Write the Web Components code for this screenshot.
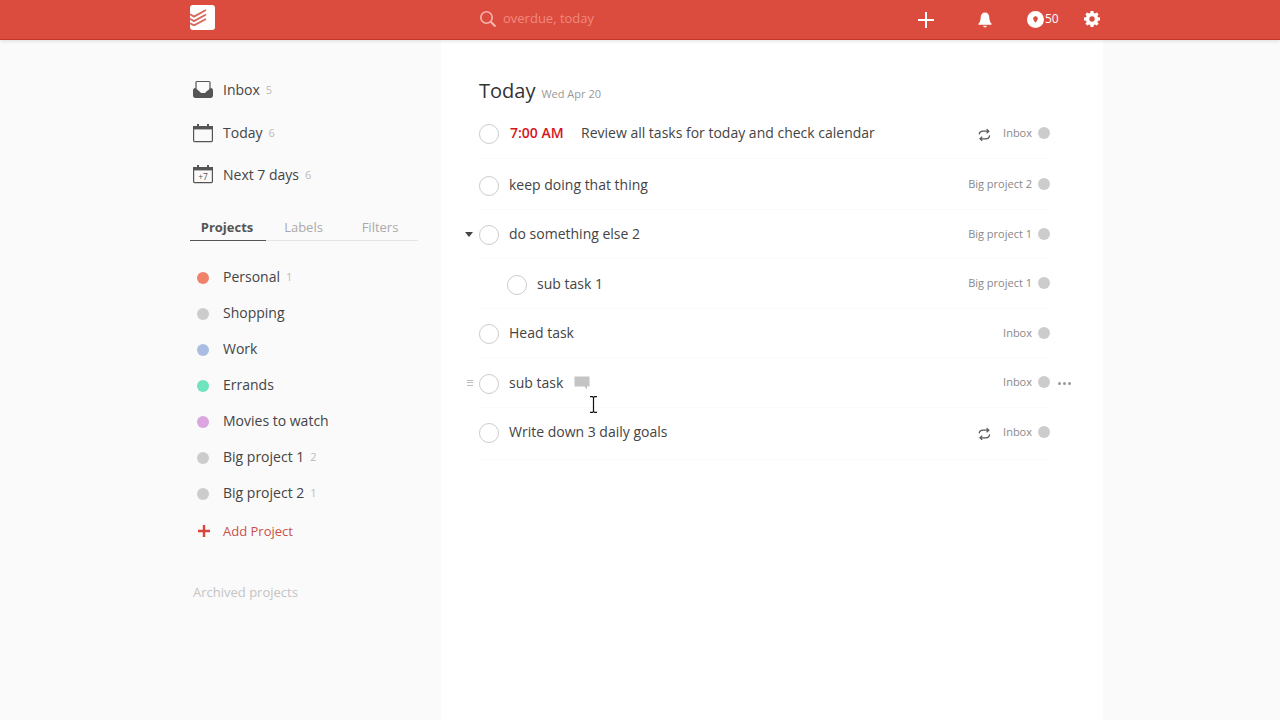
<!DOCTYPE html>
<html>
<head>
<meta charset="utf-8">
<title>Today</title>
<style>
    html, body { margin: 0; height: 100%; }
    body { background: #fafafa; font-family: "Open Sans", sans-serif; color: #333; overflow: hidden; }
</style>
</head>
<body>
<todo-app>
    <todo-sidebar slot="side"></todo-sidebar>
    <todo-task-list slot="main" heading="Today" date="Wed Apr 20">
        <todo-task time="7:00 AM" project="Inbox" repeat style="--h:51px">Review all tasks for today and check calendar</todo-task>
        <todo-task project="Big project 2" style="--h:51px;--pt:2px;--rt:-4px">keep doing that thing</todo-task>
        <todo-task project="Big project 1" caret style="--h:49px">do something else 2</todo-task>
        <todo-task project="Big project 1" indent style="--h:50px">sub task 1</todo-task>
        <todo-task project="Inbox" style="--h:49px">Head task</todo-task>
        <todo-task project="Inbox" hover style="--h:50px">sub task</todo-task>
        <todo-task project="Inbox" repeat style="--h:52px;--pb:3px">Write down 3 daily goals</todo-task>
    </todo-task-list>
</todo-app>

<script>
const REPEAT_ICON = `<svg width="13" height="14" viewBox="0 0 13 14" fill="none" stroke="#555" stroke-width="1.2">
    <path d="M1.2 6.4C1.4 4.2 3 3.2 5 3.2H10.6"/><path d="M8.6 1.2L10.8 3.2L8.6 5.2"/>
    <path d="M11.6 7.4C11.4 9.8 9.8 10.8 7.8 10.8H2.2"/><path d="M4.2 8.8L2 10.8L4.2 12.8"/>
</svg>`;

class TodoApp extends HTMLElement {
    constructor() {
        super();
        this.attachShadow({ mode: "open" });
        this.shadowRoot.innerHTML = `
        <style>
            :host { display: block; height: 720px; }
            .bar { height: 39px; background: #db4c3f; border-bottom: 1px solid #c53727; box-shadow: 0 1px 4px rgba(0,0,0,0.12); position: relative; }
            .bar-inner { display: flex; align-items: center; height: 37px; padding-left: 190px; }
            .logo { width: 25px; height: 25px; background: #fff; border-radius: 3px; display: flex; align-items: center; margin-right: 264px; margin-top: -2px; }
            .search { display: flex; align-items: center; width: 439px; }
            .search span { font-size: 13px; color: #f0897e; margin: -2px 0 0 6px; }
            .action { display: flex; align-items: center; margin-top: 2px; }
            .karma { display: flex; align-items: center; color: #fff; font-size: 12px; margin-top: 2px; }
            .karma span { margin: -3px 0 0 1px; }
            .body { display: flex; height: 680px; }
            .side { width: 251px; padding-left: 190px; flex: none; }
            .main { width: 662px; background: #fff; flex: none; }
        </style>
        <div class="bar">
            <div class="bar-inner">
                <div class="logo">
                    <svg width="17" height="17" viewBox="0 0 17 17" fill="none" stroke="#d9665b" stroke-width="1.8">
                        <path d="M0 5.3L4 7.6L16 1"/><path d="M0 9.8L4 12.1L16 5.5"/><path d="M0 14.3L4 16.4L16 10"/>
                    </svg>
                </div>
                <div class="search">
                    <svg width="18" height="18" viewBox="0 0 18 18" fill="none" stroke="#f6b5ae" stroke-width="1.6">
                        <circle cx="7.5" cy="7.5" r="5.7"/><path d="M11.7 11.7L16.5 16.5" stroke-width="2"/>
                    </svg>
                    <span>overdue, today</span>
                </div>
                <div class="action" style="width:60px">
                    <svg width="16" height="16" viewBox="0 0 16 16" fill="none" stroke="#fff" stroke-width="2"><path d="M8 0V16M0 8H16"/></svg>
                </div>
                <div class="action" style="width:49px">
                    <svg width="14" height="16" viewBox="0 0 14 16" fill="#fff"><path d="M7 0.5C9.8 0.5 11.2 2.6 11.3 5.4C11.4 8.6 12.2 10.2 13.6 11.8C13.9 12.2 13.7 12.7 13.2 12.7H0.8C0.3 12.7 0.1 12.2 0.4 11.8C1.8 10.2 2.6 8.6 2.7 5.4C2.8 2.6 4.2 0.5 7 0.5Z"/><path d="M5.2 13.7H8.8C8.6 14.8 7.9 15.4 7 15.4C6.1 15.4 5.4 14.8 5.2 13.7Z"/></svg>
                </div>
                <div class="karma" style="width:57px">
                    <svg width="17" height="17" viewBox="0 0 17 17"><circle cx="8.5" cy="8.5" r="8.5" fill="#fff"/><path d="M8.5 5.2C10 5.2 10.8 6.2 10.8 7.4C10.8 8.8 9.6 10.2 8.5 11.6C7.4 10.2 6.2 8.8 6.2 7.4C6.2 6.2 7 5.2 8.5 5.2Z" fill="#db4c3f"/></svg>
                    <span>50</span>
                </div>
                <div class="action" style="margin-top:0">
                    <svg width="16" height="16" viewBox="0 0 16 16" fill="#fff">
                        <path fill-rule="evenodd" d="M6.6 0H9.4L9.8 2.1L11 2.6L12.8 1.4L14.6 3.2L13.4 5L13.9 6.2L16 6.6V9.4L13.9 9.8L13.4 11L14.6 12.8L12.8 14.6L11 13.4L9.8 13.9L9.4 16H6.6L6.2 13.9L5 13.4L3.2 14.6L1.4 12.8L2.6 11L2.1 9.8L0 9.4V6.6L2.1 6.2L2.6 5L1.4 3.2L3.2 1.4L5 2.6L6.2 2.1ZM8 5.3A2.7 2.7 0 1 0 8 10.7A2.7 2.7 0 1 0 8 5.3Z"/>
                    </svg>
                </div>
            </div>
        </div>
        <div class="body">
            <div class="side"><slot name="side"></slot></div>
            <div class="main"><slot name="main"></slot></div>
        </div>`;
    }
}

class TodoSidebar extends HTMLElement {
    constructor() {
        super();
        this.attachShadow({ mode: "open" });
        const projects = [
            ["Personal", "#f0816a", "1"],
            ["Shopping", "#ccc", ""],
            ["Work", "#a9bde3", ""],
            ["Errands", "#6fe3bd", ""],
            ["Movies to watch", "#dba5e0", ""],
            ["Big project 1", "#ccc", "2"],
            ["Big project 2", "#ccc", "1"]
        ];
        const rows = projects.map(p => `
            <div class="project">
                <i class="dot" style="background:${p[1]}"></i>
                <span class="name">${p[0]}</span>
                <span class="count">${p[2]}</span>
            </div>`).join("");
        this.shadowRoot.innerHTML = `
        <style>
            :host { display: block; width: 228px; padding-top: 28px; font-size: 14px; color: #444; }
            .nav { display: flex; align-items: center; height: 43px; padding-left: 3px; }
            .nav:nth-of-type(3) { height: 42px; margin-top: -1px; }
            .nav svg { width: 20px; height: 20px; margin-right: 10px; flex: none; }
            .count { font-size: 11px; color: #bbb; margin-left: 6px; }
            .tabs { display: flex; margin-top: 19.5px; width: 228px; height: 25px; border-bottom: 1px solid #e5e5e5; font-size: 13px; color: #aaa; }
            .tab { width: 77px; box-sizing: border-box; text-align: center; line-height: 24px; }
            .tab.on { color: #555; font-weight: 700; border-bottom: 1px solid #555; height: 26px; padding-right: 2px; }
            .tab.on + .tab { padding-right: 1px; }
            .projects { margin-top: 18px; }
            .project { display: flex; align-items: center; height: 36px; }
            .dot { width: 12px; height: 12px; border-radius: 50%; margin: 2px 14px 0 7px; flex: none; }
            .add { display: flex; align-items: center; height: 40px; color: #c9504a; font-size: 13px; }
            .add svg { margin: 0 13px 0 8px; }
            .archived { margin: 33px 0 0 3px; font-size: 13px; color: #c4c4c4; line-height: 17px; }
        </style>
        <div class="nav">
            <svg viewBox="0 0 20 20" fill="none" stroke="#555" stroke-width="1.2"><path d="M3 9V2.6C3 1.9 3.5 1.5 4.1 1.5H15.9C16.5 1.5 17 1.9 17 2.6V9"/><path fill="#555" stroke="none" d="M2 7.8L6.3 11.2C7 11.8 7.5 12.4 8.2 13H11.8C12.5 12.4 13 11.8 13.7 11.2L18 7.8C19 8.4 20 9.2 20 10.5V15.5C20 16.8 19 18 17.6 18H2.4C1 18 0 16.8 0 15.5V10.5C0 9.2 1 8.4 2 7.8Z"/></svg>
            <span>Inbox</span><span class="count">5</span>
        </div>
        <div class="nav">
            <svg viewBox="0 0 20 20" fill="none" stroke="#555" stroke-width="1.2"><rect x="0.6" y="3.6" width="18.8" height="15" rx="1"/><rect x="0" y="3" width="20" height="3.4" fill="#555" stroke="none"/><rect x="4" y="1" width="2" height="3" fill="#555" stroke="none"/><rect x="14" y="1" width="2" height="3" fill="#555" stroke="none"/></svg>
            <span>Today</span><span class="count">6</span>
        </div>
        <div class="nav">
            <svg viewBox="0 0 20 20" fill="none" stroke="#555" stroke-width="1.2"><rect x="0.6" y="3.6" width="18.8" height="15" rx="1"/><rect x="0" y="3" width="20" height="3.4" fill="#555" stroke="none"/><rect x="4" y="1" width="2" height="3" fill="#555" stroke="none"/><rect x="14" y="1" width="2" height="3" fill="#555" stroke="none"/><text x="10" y="15.5" font-size="8.5" fill="#555" stroke="none" text-anchor="middle" font-family="Open Sans">+7</text></svg>
            <span>Next 7 days</span><span class="count">6</span>
        </div>
        <div class="tabs">
            <div class="tab on">Projects</div>
            <div class="tab">Labels</div>
            <div class="tab">Filters</div>
        </div>
        <div class="projects">${rows}</div>
        <div class="add">
            <svg width="12" height="12" viewBox="0 0 12 12" fill="none" stroke="#d9453b" stroke-width="2.4"><path d="M6 0V12M0 6H12"/></svg>
            <span>Add Project</span>
        </div>
        <div class="archived">Archived projects</div>`;
    }
}

class TodoTaskList extends HTMLElement {
    constructor() {
        super();
        this.attachShadow({ mode: "open" });
        this.shadowRoot.innerHTML = `
        <style>
            :host { display: block; padding: 0 0 0 38px; position: relative; height: 680px; }
            .head { display: flex; align-items: baseline; height: 68px; box-sizing: border-box; line-height: 102px; }
            h1 { font-size: 20px; font-weight: 400; margin: 0; color: #333; }
            .date { font-size: 11px; color: #999; margin-left: 6px; }
            .list { width: 571px; }
            .cursor { position: absolute; left: 148px; top: 356px; }
        </style>
        <div class="head"><h1></h1><span class="date"></span></div>
        <div class="list"><slot></slot></div>
        <svg class="cursor" width="9" height="17" viewBox="0 0 9 17" fill="none" stroke="#111" stroke-width="1.2"><path d="M1 0.6H3.5L4.5 1.6L5.5 0.6H8M4.5 1.6V15.4M1 16.4H3.5L4.5 15.4L5.5 16.4H8"/></svg>`;
        this.shadowRoot.querySelector("h1").textContent = this.getAttribute("heading");
        this.shadowRoot.querySelector(".date").textContent = this.getAttribute("date");
    }
}

class TodoTask extends HTMLElement {
    constructor() {
        super();
        this.attachShadow({ mode: "open" });
        const time = this.getAttribute("time");
        const hover = this.hasAttribute("hover");
        this.shadowRoot.innerHTML = `
        <style>
            :host { display: block; height: var(--h, 50px); padding-top: var(--pt, 0); padding-bottom: var(--pb, 0); box-sizing: border-box; border-bottom: 1px solid #fbfbfb; font-size: 14px; color: #444; }
            .row { display: flex; align-items: center; height: 100%; position: relative; }
            :host([indent]) .row { padding-left: 28px; }
            .check { width: 18px; height: 18px; border: 1px solid #ccc; border-radius: 50%; margin: 2px 10px 0 0; flex: none; }
            .time { color: #d8141c; font-weight: 600; width: 71px; margin: -2px 0 0 1px; flex: none; }
            .text { flex: none; margin-top: -1px; }
            .note { margin: 0 0 0 11px; }
            .right { display: flex; align-items: center; margin-left: auto; margin-top: var(--rt, -2px); font-size: 11px; color: #888; }
            .repeat { display: flex; margin-right: 12px; margin-top: 5px; }
            .dot { width: 12px; height: 12px; border-radius: 50%; background: #ccc; margin: 1px 0 0 6px; }
            .caret { position: absolute; left: -14px; top: 50%; margin-top: -2px; border: 4.5px solid transparent; border-top: 5px solid #444; border-bottom: 0; }
            .drag { position: absolute; left: -12px; top: 50%; margin-top: -3px; width: 6px; height: 6px; border-top: 1px solid #bbb; border-bottom: 1px solid #bbb; box-sizing: border-box; }
            .drag::after { content: ""; display: block; height: 1px; margin-top: 1.5px; background: #bbb; }
            .menu { position: absolute; right: -21px; top: 50%; margin-top: -1px; display: flex; gap: 2px; }
            .menu i { width: 3px; height: 3px; border-radius: 50%; background: #999; }
        </style>
        <div class="row">
            ${this.hasAttribute("caret") ? '<div class="caret"></div>' : ""}
            ${hover ? '<div class="drag"></div>' : ""}
            <div class="check"></div>
            ${time ? `<span class="time">${time}</span>` : ""}
            <span class="text"><slot></slot></span>
            ${hover ? `<svg class="note" width="16" height="14" viewBox="0 0 16 14" fill="#c4c4c4"><path d="M0.5 0.5H15.5V10.5H13V13.5L10.4 10.5H0.5Z"/></svg>` : ""}
            <div class="right">
                ${this.hasAttribute("repeat") ? `<span class="repeat">${REPEAT_ICON}</span>` : ""}
                <span>${this.getAttribute("project")}</span>
                <i class="dot"></i>
            </div>
            ${hover ? '<div class="menu"><i></i><i></i><i></i></div>' : ""}
        </div>`;
    }
}

customElements.define("todo-app", TodoApp);
customElements.define("todo-sidebar", TodoSidebar);
customElements.define("todo-task-list", TodoTaskList);
customElements.define("todo-task", TodoTask);
</script>
</body>
</html>
